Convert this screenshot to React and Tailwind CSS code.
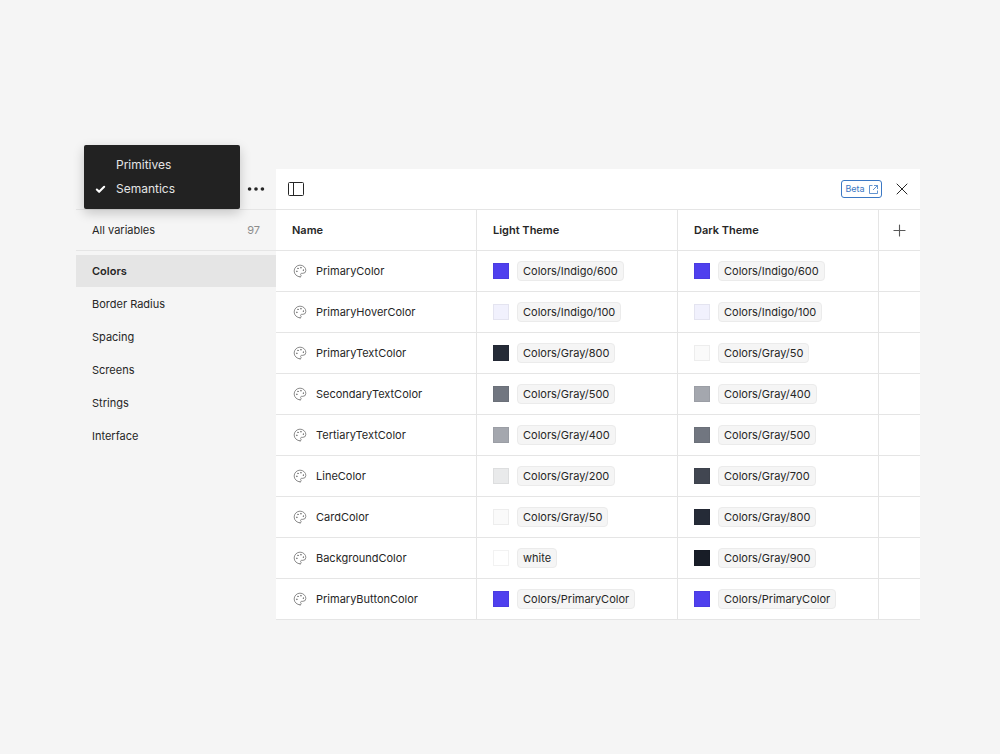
import React from 'react';
import { Palette, Check, X, Plus, Ellipsis } from 'lucide-react';

const groups = ['Colors', 'Border Radius', 'Spacing', 'Screens', 'Strings', 'Interface'];

const rows = [
  { name: 'PrimaryColor', light: ['#4f40ee', 'Colors/Indigo/600'], dark: ['#4f40ee', 'Colors/Indigo/600'] },
  { name: 'PrimaryHoverColor', light: ['#f1f1fd', 'Colors/Indigo/100'], dark: ['#f1f1fd', 'Colors/Indigo/100'] },
  { name: 'PrimaryTextColor', light: ['#252b37', 'Colors/Gray/800'], dark: ['#fafafa', 'Colors/Gray/50'] },
  { name: 'SecondaryTextColor', light: ['#717680', 'Colors/Gray/500'], dark: ['#a4a7ae', 'Colors/Gray/400'] },
  { name: 'TertiaryTextColor', light: ['#a4a7ae', 'Colors/Gray/400'], dark: ['#717680', 'Colors/Gray/500'] },
  { name: 'LineColor', light: ['#e9eaeb', 'Colors/Gray/200'], dark: ['#414651', 'Colors/Gray/700'] },
  { name: 'CardColor', light: ['#fafafa', 'Colors/Gray/50'], dark: ['#252b37', 'Colors/Gray/800'] },
  { name: 'BackgroundColor', light: ['#ffffff', 'white'], dark: ['#181d27', 'Colors/Gray/900'] },
  { name: 'PrimaryButtonColor', light: ['#4f40ee', 'Colors/PrimaryColor'], dark: ['#4f40ee', 'Colors/PrimaryColor'] },
];

const ValueCell = ({ value }) => (
  <div className="flex items-center gap-2 pl-4 w-[201px] border-r border-[#e5e5e5]">
    <span
      className="w-4 h-4 shrink-0 border border-black/5"
      style={{ backgroundColor: value[0] }}
    />
    <span className="h-5 px-[5px] flex items-center rounded-[4px] bg-[#f5f5f5] border border-[#ebebeb] text-[11px] text-[#262626]">
      {value[1]}
    </span>
  </div>
);

const App = () => {
  return (
    <div className="min-h-[754px] bg-[#f5f5f5] pt-[169px] pl-[76px] font-['Inter',sans-serif] text-[11px] text-[#262626]">
      <div className="relative flex w-[844px]">
        {/* dropdown */}
        <div className="absolute left-2 top-[-24px] w-[156px] h-[64px] rounded-[2px] bg-[#222222] text-[#e5e5e5] text-xs py-2 shadow-[0_4px_12px_rgba(0,0,0,0.2)] z-10">
          <div className="h-6 pl-8 flex items-center">Primitives</div>
          <div className="h-6 pl-8 flex items-center relative">
            <Check size={11} strokeWidth={4.5} className="absolute left-[11px] text-white" />
            Semantics
          </div>
        </div>

        {/* sidebar */}
        <div className="w-[200px] shrink-0">
          <div className="h-[41px] border-b border-[#e5e5e5] flex items-center justify-end pr-[9px]">
            <Ellipsis size={22} strokeWidth={2} className="text-[#262626]" />
          </div>
          <div className="h-[41px] pt-px border-b border-[#e5e5e5] flex items-center justify-between px-4">
            <span>All variables</span>
            <span className="text-[#8c8c8c]">97</span>
          </div>
          <div className="pt-1 flex flex-col gap-px">
            {groups.map((g, i) => (
              <div
                key={g}
                className={`h-8 flex items-center px-4 ${i === 0 ? 'bg-[#e5e5e5] font-semibold' : ''}`}
              >
                {g}
              </div>
            ))}
          </div>
        </div>

        {/* table */}
        <div className="w-[644px] bg-white">
          <div className="h-[41px] border-b border-[#e5e5e5] flex items-center pl-3 pr-3">
            <svg width="16" height="14" viewBox="0 0 16 14" fill="none" stroke="#262626" strokeWidth="1">
              <rect x="0.5" y="0.5" width="15" height="13" rx="1" />
              <path d="M5.5 0.5V13.5" />
            </svg>
            <div className="ml-auto h-[18px] w-[41px] flex items-center justify-center gap-1 rounded-[3px] border border-[#3b78c4] text-[9px] text-[#3b78c4]">
              Beta
              <svg width="9" height="9" viewBox="0 0 9 9" fill="none" stroke="currentColor" strokeWidth="0.8">
                <path d="M3.5 0.5H0.5V8.5H8.5V5.5" />
                <path d="M5 0.5H8.5V4M8.5 0.5L4 5" />
              </svg>
            </div>
            <X size={20} strokeWidth={1.2} className="ml-[10px] mr-[-4px] text-[#262626]" />
          </div>

          <div className="flex h-[41px] border-b border-[#e5e5e5] font-semibold">
            <div className="w-[201px] pl-4 flex items-center border-r border-[#e5e5e5]">Name</div>
            <div className="w-[201px] pl-4 flex items-center border-r border-[#e5e5e5]">Light Theme</div>
            <div className="w-[201px] pl-4 flex items-center border-r border-[#e5e5e5]">Dark Theme</div>
            <div className="flex-1 flex items-center justify-center pr-px">
              <Plus size={19} strokeWidth={1.4} className="text-[#595959]" />
            </div>
          </div>

          {rows.map((row) => (
            <div key={row.name} className="flex h-[41px] border-b border-[#e5e5e5]">
              <div className="w-[201px] pl-[17px] flex items-center gap-[9px] border-r border-[#e5e5e5]">
                <Palette size={14} strokeWidth={1.4} className="text-[#737373]" />
                <span>{row.name}</span>
              </div>
              <ValueCell value={row.light} />
              <ValueCell value={row.dark} />
              <div className="flex-1" />
            </div>
          ))}
        </div>
      </div>
    </div>
  );
};

export default App;
